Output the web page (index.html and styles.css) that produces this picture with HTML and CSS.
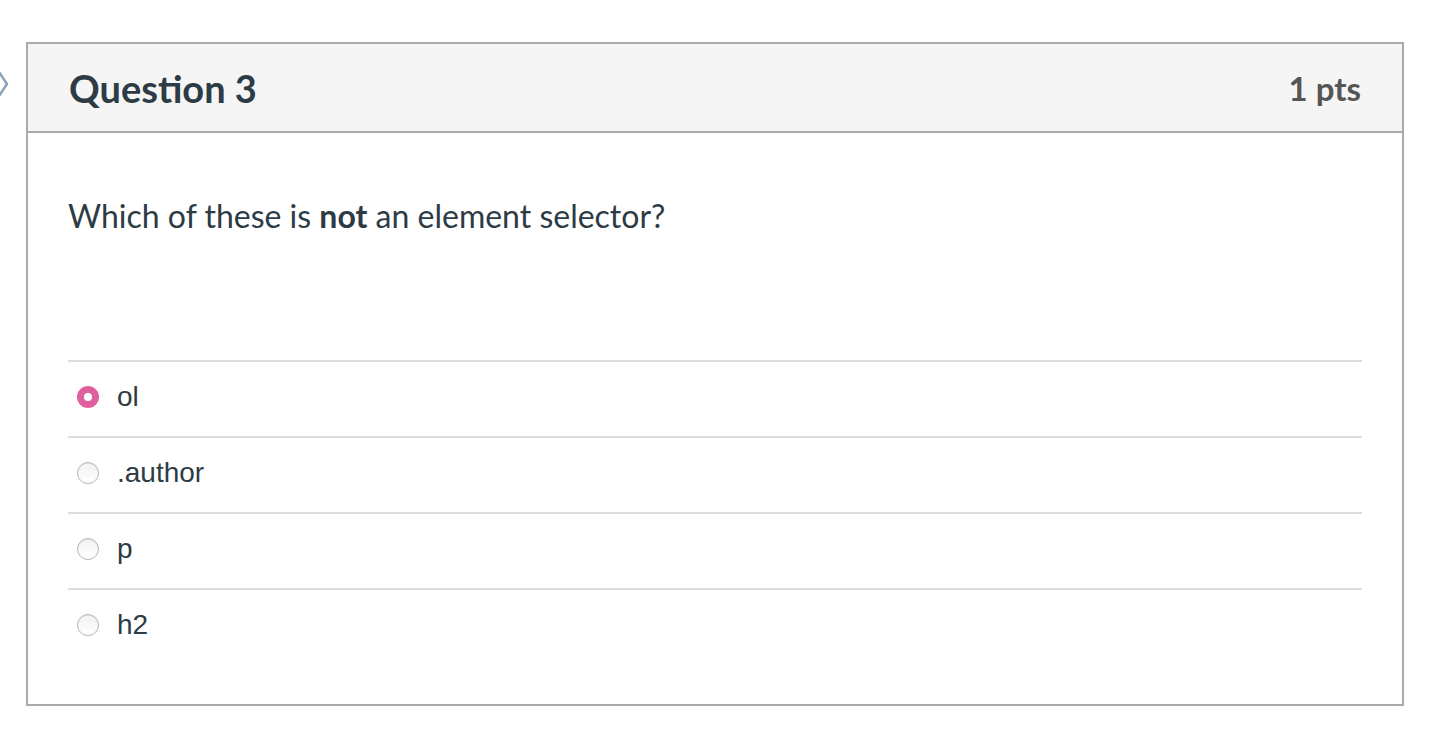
FILE: index.html
```html
<!DOCTYPE html>
<html lang="en">
<head>
<meta charset="utf-8">
<title>Question 3</title>
<link rel="stylesheet" href="styles.css">
</head>
<body>
<div class="page">
  <svg class="pointer" width="12" height="40" viewBox="0 0 12 40" aria-hidden="true">
    <polyline points="-1,2 7,14 -1,26" fill="none" stroke="#8aa1b6" stroke-width="2.4" stroke-linejoin="round"/>
  </svg>
  <div class="quiz">
    <div class="header">
      <h2 class="title">Question 3</h2>
      <span class="pts">1 pts</span>
    </div>
    <div class="content">
      <p class="question">Which of these is <strong>not</strong> an element selector?</p>
      <div class="answers">
        <label class="answer"><span class="radio selected"></span><span class="text">ol</span></label>
        <label class="answer"><span class="radio"></span><span class="text">.author</span></label>
        <label class="answer"><span class="radio"></span><span class="text">p</span></label>
        <label class="answer"><span class="radio"></span><span class="text">h2</span></label>
      </div>
    </div>
  </div>
</div>
</body>
</html>
```
FILE: styles.css
```css
html, body {
  margin: 0;
  padding: 0;
  background: #ffffff;
}
body {
  font-family: Lato, "Noto Sans", sans-serif;
  color: #2d3b45;
}
.page {
  position: relative;
  padding: 42px 0 0 26px;
}
.pointer {
  position: absolute;
  left: 0;
  top: 70px;
}
.quiz {
  width: 1378px;
  box-sizing: border-box;
  border: 2px solid #aaaaaa;
}
.header {
  height: 87px;
  background: #f5f5f5;
  border-bottom: 2px solid #aaaaaa;
  display: flex;
  align-items: center;
  justify-content: space-between;
  padding: 0 41px;
}
.title {
  margin: 0;
  font-size: 38px;
  font-weight: 700;
  color: #2d3b45;
}
.pts {
  font-size: 33px;
  font-weight: 700;
  color: #555555;
}
.content {
  padding: 0 40px 40px;
}
.question {
  margin: 0;
  padding-top: 63px;
  height: 227px;
  box-sizing: border-box;
  font-size: 32px;
  line-height: 40px;
}
.question strong {
  font-weight: 700;
}
.answer {
  display: flex;
  align-items: center;
  gap: 18px;
  height: 76px;
  box-sizing: border-box;
  border-top: 2px solid #dddddd;
  padding: 0 0 4px 9px;
}
.radio {
  width: 22px;
  height: 22px;
  box-sizing: border-box;
  border-radius: 50%;
  border: 1px solid #b5b5b5;
  background: linear-gradient(#f2f2f2, #ffffff);
  box-shadow: inset 0 1px 1px rgba(0,0,0,0.06);
  flex: none;
}
.radio.selected {
  border: 7px solid #e0609d;
  background: #ffffff;
  box-shadow: none;
}
.text {
  font-family: "Liberation Sans", Arial, sans-serif;
  font-size: 28px;
  color: #2d3b45;
}
```
